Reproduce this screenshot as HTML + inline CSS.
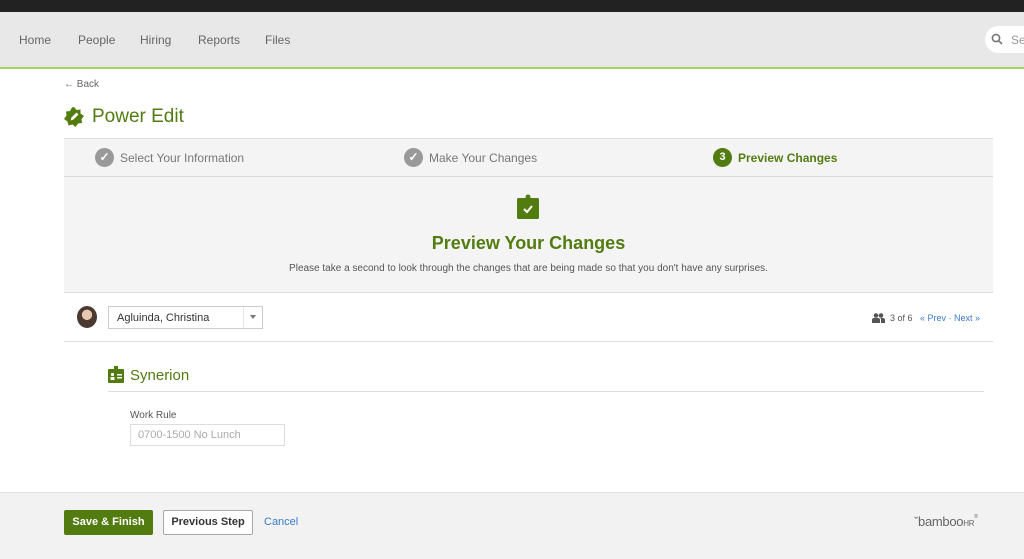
<!DOCTYPE html>
<html><head><style>
*{margin:0;padding:0;box-sizing:border-box}
body{width:1024px;height:559px;overflow:hidden;background:#fff;font-family:"Liberation Sans",sans-serif;position:relative;color:#555}
.abs{position:absolute}
.g{color:#527b10}
</style></head><body>
<div class="abs" style="left:0;top:0;width:1024px;height:12px;background:#222"></div>
<div class="abs" style="left:0;top:12px;width:1024px;height:55px;background:#e8e8e8"></div>
<div class="abs" style="left:0;top:67px;width:1024px;height:2px;background:#a6d15a"></div>
<div class="abs" style="top:33px;left:19px;font-size:12px;color:#666">Home</div>
<div class="abs" style="top:33px;left:78px;font-size:12px;color:#666">People</div>
<div class="abs" style="top:33px;left:140px;font-size:12px;color:#666">Hiring</div>
<div class="abs" style="top:33px;left:198px;font-size:12px;color:#666">Reports</div>
<div class="abs" style="top:33px;left:265px;font-size:12px;color:#666">Files</div>
<div class="abs" style="left:985px;top:26px;width:60px;height:27px;border-radius:14px;background:#fff"></div>
<svg class="abs" style="left:991px;top:33px" width="12" height="12"><circle cx="5" cy="5" r="3.6" fill="none" stroke="#777" stroke-width="1.6"/><path d="M8 8l3 3" stroke="#777" stroke-width="1.6"/></svg>
<div class="abs" style="left:1011px;top:33px;font-size:12px;color:#999">Se</div>

<div class="abs" style="left:64px;top:79px;font-size:10px;color:#666">← Back</div>
<svg class="abs" style="left:64px;top:107px" width="20" height="20" viewBox="0 0 20 20"><polygon points="10,0 12.5,3 16.5,2.5 16.5,6.5 20,9 17.5,12 18,16 14,16.5 11.5,20 8.5,17.5 4.5,18.5 3.5,14.5 0,12 2.5,8.5 2,4.5 6,4 8,0.5" fill="#527b10"/><path d="M6.5 13.5l1-3 5-5 2 2-5 5z" fill="#fff"/></svg>
<div class="abs g" style="left:92px;top:106px;font-size:19px">Power Edit</div>

<div class="abs" style="left:64px;top:138px;width:929px;height:155px;background:#f4f4f4;border-top:1px solid #ddd;border-bottom:1px solid #ddd"></div>
<div class="abs" style="left:64px;top:176px;width:929px;height:1px;background:#d8d8d8"></div>
<div class="abs" style="left:95px;top:148px;width:19px;height:19px;border-radius:50%;background:#999;color:#fff;font-size:12px;font-weight:bold;text-align:center;line-height:19px">✓</div>
<div class="abs" style="left:120px;top:151px;font-size:12px;color:#777">Select Your Information</div>
<div class="abs" style="left:404px;top:148px;width:19px;height:19px;border-radius:50%;background:#999;color:#fff;font-size:12px;font-weight:bold;text-align:center;line-height:19px">✓</div>
<div class="abs" style="left:429px;top:151px;font-size:12px;color:#777">Make Your Changes</div>
<div class="abs" style="left:713px;top:148px;width:19px;height:19px;border-radius:50%;background:#527b10;color:#fff;font-size:11px;font-weight:bold;text-align:center;line-height:19px">3</div>
<div class="abs g" style="left:738px;top:151px;font-size:12px;font-weight:bold">Preview Changes</div>

<svg class="abs" style="left:517px;top:194px" width="22" height="25"><rect x="0" y="4" width="22" height="21" rx="1.5" fill="#527b10"/><circle cx="11" cy="3" r="2.5" fill="#527b10"/><path d="M7 15l3 3 5-6" fill="none" stroke="#fff" stroke-width="2"/></svg>
<div class="abs g" style="left:0;width:1057px;top:233px;font-size:18px;font-weight:bold;text-align:center">Preview Your Changes</div>
<div class="abs" style="left:0;width:1057px;top:263px;font-size:10px;color:#555;text-align:center">Please take a second to look through the changes that are being made so that you don't have any surprises.</div>

<div class="abs" style="left:77px;top:306px;width:20px;height:22px;border-radius:50%;background:radial-gradient(circle at 50% 40%,#e8c8b0 30%,#4a3a30 32%);"></div>
<div class="abs" style="left:108px;top:306px;width:155px;height:23px;border:1px solid #ccc;background:#fff;font-size:11px;color:#333;padding:5px 8px">Agluinda, Christina</div>
<div class="abs" style="left:243px;top:307px;width:1px;height:21px;background:#e4e4e4"></div>
<div class="abs" style="left:250px;top:315px;border-left:3px solid transparent;border-right:3px solid transparent;border-top:4px solid #777"></div>
<svg class="abs" style="left:872px;top:313px" width="13" height="10"><circle cx="4" cy="2.5" r="2.3" fill="#555"/><circle cx="9" cy="2.5" r="2.3" fill="#555"/><path d="M0 10v-3q0-2 2-2h4q2 0 2 2v3zM9 10v-3q0-2-1-2h3q2 0 2 2v3z" fill="#555"/></svg>
<div class="abs" style="left:890px;top:313px;font-size:9px;color:#555">3 of 6</div>
<div class="abs" style="left:920px;top:313px;font-size:9px;color:#3a7bc8">« Prev · Next »</div>
<div class="abs" style="left:64px;top:341px;width:929px;height:1px;background:#ddd"></div>

<svg class="abs" style="left:108px;top:366px" width="16" height="17"><rect x="0" y="3" width="16" height="14" rx="1" fill="#527b10"/><rect x="6" y="0" width="4" height="4" fill="#527b10"/><circle cx="4.5" cy="8.5" r="1.6" fill="#fff"/><rect x="2.5" y="11" width="4" height="3" fill="#fff"/><rect x="9" y="8" width="5" height="1.5" fill="#fff"/><rect x="9" y="11" width="5" height="1.5" fill="#fff"/></svg>
<div class="abs g" style="left:130px;top:367px;font-size:15px">Synerion</div>
<div class="abs" style="left:108px;top:391px;width:876px;height:1px;background:#ddd"></div>
<div class="abs" style="left:130px;top:410px;font-size:10px;color:#555">Work Rule</div>
<div class="abs" style="left:130px;top:424px;width:155px;height:22px;border:1px solid #ddd;font-size:11px;color:#aaa;padding:4px 7px">0700-1500 No Lunch</div>

<div class="abs" style="left:0;top:492px;width:1024px;height:67px;background:#f2f2f2;border-top:1px solid #e4e4e4"></div>
<div class="abs" style="left:64px;top:510px;width:89px;height:25px;background:#527b10;border-radius:2px;color:#fff;font-size:11px;font-weight:bold;text-align:center;line-height:25px">Save &amp; Finish</div>
<div class="abs" style="left:163px;top:510px;width:90px;height:25px;background:#fff;border:1px solid #aaa;border-radius:2px;color:#333;font-size:11px;font-weight:bold;text-align:center;line-height:23px">Previous Step</div>
<div class="abs" style="left:264px;top:516px;font-size:11px;color:#3a7bc8">Cancel</div>
<div class="abs" style="left:914px;top:514px;font-size:13px;color:#666;letter-spacing:-0.3px">ˇbamboo<span style="font-size:8px">HR</span><span style="font-size:5px;vertical-align:top">®</span></div>
</body></html>
